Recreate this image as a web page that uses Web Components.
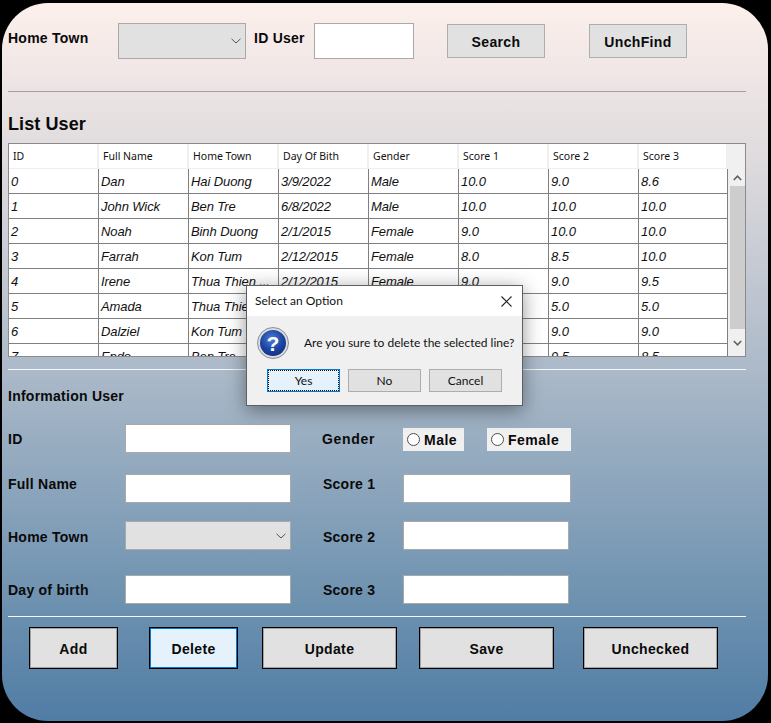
<!DOCTYPE html>
<html lang="en">
<head>
<meta charset="utf-8">
<title>User Manager</title>
<style>
  html, body { margin: 0; background: #000; }
  body { width: 771px; height: 723px; overflow: hidden; font-family: "Liberation Sans", Arial, sans-serif; }
</style>
</head>
<body>
<user-panel>
  <search-bar></search-bar>
  <ui-rule tone="dark" style="margin-top:32px"></ui-rule>
  <ui-title style="margin-top:22px">List User</ui-title>
  <user-table style="margin-top:8px"></user-table>
  <ui-rule tone="light" style="margin-top:12px"></ui-rule>
  <user-form></user-form>
  <ui-rule tone="light" style="margin-top:12px"></ui-rule>
  <action-bar></action-bar>
  <option-dialog heading="Select an Option">Are you sure to delete the selected line?</option-dialog>
</user-panel>

<script>
const CHEVRON = `<svg width="10" height="6" viewBox="0 0 10 6"><path d="M.5.8 5 5 9.5.8" fill="none" stroke="#555" stroke-width="1"/></svg>`;

class UserPanel extends HTMLElement {
  constructor() {
    super();
    this.attachShadow({ mode: 'open' });
  }

  connectedCallback() {
    this.shadowRoot.innerHTML = `
      <style>
        :host {
          display: flex;
          flex-direction: column;
          position: relative;
          box-sizing: border-box;
          width: 766px;
          height: 718px;
          margin: 3px 0 0 2px;
          padding: 20px 22px 0 6px;
          border-radius: 46px;
          overflow: hidden;
          background: linear-gradient(180deg, #fdf0ec 0%, #dbd8dc 24%, #a8b7c7 53%, #6e92b0 83%, #517ca5 100%);
        }
      </style>
      <slot></slot>
    `;
  }
}

class UiRule extends HTMLElement {
  constructor() {
    super();
    this.attachShadow({ mode: 'open' });
  }

  connectedCallback() {
    const color = this.getAttribute('tone') === 'light' ? '#f4f6f8' : '#a0a0a0';
    this.shadowRoot.innerHTML = `<style>:host { display: block; height: 1px; background: ${color}; }</style>`;
  }
}

class UiTitle extends HTMLElement {
  constructor() {
    super();
    this.attachShadow({ mode: 'open' });
  }

  connectedCallback() {
    this.shadowRoot.innerHTML = `
      <style>
        :host { display: block; font: bold 18px/21px "Liberation Sans", Arial, sans-serif; letter-spacing: .1px; color: #0a0a0a; }
      </style>
      <slot></slot>
    `;
  }
}

class UiLabel extends HTMLElement {
  constructor() {
    super();
    this.attachShadow({ mode: 'open' });
  }

  connectedCallback() {
    this.shadowRoot.innerHTML = `
      <style>
        :host {
          display: block;
          font: bold 14px/16px "Liberation Sans", Arial, sans-serif;
          letter-spacing: .25px;
          color: #0a0a0a;
          white-space: nowrap;
        }
      </style>
      <slot></slot>
    `;
  }
}

class UiInput extends HTMLElement {
  constructor() {
    super();
    this.attachShadow({ mode: 'open' });
  }

  connectedCallback() {
    this.shadowRoot.innerHTML = `
      <style>
        :host { display: block; box-sizing: border-box; height: 29px; background: #fff; border: 1px solid #a9a9a9; }
      </style>
    `;
  }
}

class UiCombo extends HTMLElement {
  constructor() {
    super();
    this.attachShadow({ mode: 'open' });
  }

  connectedCallback() {
    this.shadowRoot.innerHTML = `
      <style>
        :host {
          display: flex;
          align-items: center;
          justify-content: flex-end;
          box-sizing: border-box;
          height: 29px;
          padding: 0 4px 0 0;
          background: #e1e1e1;
          border: 1px solid #a9a9a9;
        }
      </style>
      ${CHEVRON}
    `;
  }
}

class UiButton extends HTMLElement {
  constructor() {
    super();
    this.attachShadow({ mode: 'open' });
  }

  connectedCallback() {
    this.shadowRoot.innerHTML = `
      <style>
        :host {
          display: flex;
          align-items: center;
          justify-content: center;
          box-sizing: border-box;
          padding-top: 2px;
          font: bold 14px/16px "Liberation Sans", Arial, sans-serif;
          letter-spacing: .35px;
          color: #0a0a0a;
          background: #e1e1e1;
        }
        :host([kind="flat"]) { border: 1px solid #adadad; }
        :host([kind="raised"]) { border: 1px solid #000; box-shadow: inset 0 0 0 1px #a3a3a3; }
        :host([kind="active"]) { border: 1px solid #000; box-shadow: inset 0 0 0 1px #0078d7; background: #e5f1fb; }
      </style>
      <slot></slot>
    `;
  }
}

class UiRadio extends HTMLElement {
  constructor() {
    super();
    this.attachShadow({ mode: 'open' });
  }

  connectedCallback() {
    this.shadowRoot.innerHTML = `
      <style>
        :host {
          display: flex;
          align-items: center;
          gap: 4px;
          box-sizing: border-box;
          height: 23px;
          padding-left: 4px;
          background: #f0f0f0;
          font: bold 14px/16px "Liberation Sans", Arial, sans-serif;
          letter-spacing: .5px;
          color: #0a0a0a;
        }
        i {
          display: block;
          box-sizing: border-box;
          width: 13px;
          height: 13px;
          border: 1px solid #4d4d4d;
          border-radius: 50%;
          background: #fff;
        }
      </style>
      <i></i><slot></slot>
    `;
  }
}

class SearchBar extends HTMLElement {
  constructor() {
    super();
    this.attachShadow({ mode: 'open' });
  }

  connectedCallback() {
    this.shadowRoot.innerHTML = `
      <style>
        :host { display: flex; align-items: flex-start; }
        .lbl { margin-top: 7px; }
        .town { width: 110px; }
        ui-combo { width: 128px; height: 36px; }
        .uid { width: 60px; margin-left: 8px; }
        ui-input { width: 100px; height: 36px; }
        ui-button { width: 98px; height: 34px; margin-top: 1px; }
        .search { margin-left: 33px; }
        .unch { margin-left: 44px; }
      </style>
      <ui-label class="lbl town">Home Town</ui-label>
      <ui-combo></ui-combo>
      <ui-label class="lbl uid">ID User</ui-label>
      <ui-input></ui-input>
      <ui-button class="search" kind="flat">Search</ui-button>
      <ui-button class="unch" kind="flat">UnchFind</ui-button>
    `;
  }
}

class UserTable extends HTMLElement {
  constructor() {
    super();
    this.attachShadow({ mode: 'open' });
  }

  connectedCallback() {
    const heads = ['ID', 'Full Name', 'Home Town', 'Day Of Bith', 'Gender', 'Score 1', 'Score 2', 'Score 3'];
    const rows = [
      ['0', 'Dan', 'Hai Duong', '3/9/2022', 'Male', '10.0', '9.0', '8.6'],
      ['1', 'John Wick', 'Ben Tre', '6/8/2022', 'Male', '10.0', '10.0', '10.0'],
      ['2', 'Noah', 'Binh Duong', '2/1/2015', 'Female', '9.0', '10.0', '10.0'],
      ['3', 'Farrah', 'Kon Tum', '2/12/2015', 'Female', '8.0', '8.5', '10.0'],
      ['4', 'Irene', 'Thua Thien ...', '2/12/2015', 'Female', '9.0', '9.0', '9.5'],
      ['5', 'Amada', 'Thua Thien ...', '2/12/2015', 'Female', '5.0', '5.0', '5.0'],
      ['6', 'Dalziel', 'Kon Tum', '2/12/2015', 'Female', '9.0', '9.0', '9.0'],
      ['7', 'Endo', 'Ben Tre', '2/12/2015', 'Female', '9.5', '9.5', '8.5']
    ];

    this.shadowRoot.innerHTML = `
      <style>
        :host {
          display: grid;
          grid-template-columns: 719px 18px;
          box-sizing: border-box;
          width: 738px;
          height: 214px;
          border: 1px solid #8a8a8a;
          background: #fff;
          overflow: hidden;
        }
        .grid { min-width: 0; }
        .row {
          display: grid;
          grid-template-columns: 90px 90px 90px 90px 90px 90px 90px 89px;
        }
        .head { height: 25px; box-sizing: border-box; border-bottom: 1px solid #eee; }
        .head span {
          box-sizing: border-box;
          padding-left: 4px;
          border-right: 2px solid #f0f0f0;
          font: 10.5px/24px "Noto Sans", Tahoma, sans-serif;
          color: #111;
        }
        .body { height: 25px; box-sizing: border-box; border-bottom: 1px solid #808080; }
        .body span {
          box-sizing: border-box;
          padding-left: 2px;
          border-right: 1px solid #808080;
          font: italic 13px/26px "Liberation Sans", Arial, sans-serif;
          letter-spacing: -.1px;
          color: #111;
          white-space: nowrap;
          overflow: hidden;
        }
        .bar {
          display: flex;
          flex-direction: column;
          align-items: center;
          background: #f0f0f0;
        }
        .up { height: 17px; margin-top: 25px; display: flex; align-items: center; }
        .thumb { width: 15px; height: 143px; background: #cdcdcd; }
        .down { height: 27px; display: flex; align-items: center; }
      </style>
      <div class="grid">
        <div class="row head">${heads.map(h => `<span>${h}</span>`).join('')}</div>
        ${rows.map(r => `<div class="row body">${r.map(c => `<span>${c}</span>`).join('')}</div>`).join('')}
      </div>
      <div class="bar">
        <div class="up"><svg width="9" height="6" viewBox="0 0 9 6"><path d="M.8 5 4.5 1.2 8.2 5" fill="none" stroke="#606060" stroke-width="1.6"/></svg></div>
        <div class="thumb"></div>
        <div class="down"><svg width="9" height="6" viewBox="0 0 9 6"><path d="M.8 1 4.5 4.8 8.2 1" fill="none" stroke="#606060" stroke-width="1.6"/></svg></div>
      </div>
    `;
  }
}

class UserForm extends HTMLElement {
  constructor() {
    super();
    this.attachShadow({ mode: 'open' });
  }

  connectedCallback() {
    this.shadowRoot.innerHTML = `
      <style>
        :host { display: block; padding-top: 18px; }
        .row {
          display: grid;
          grid-template-columns: 117px 166px 31px 81px 168px;
          align-items: center;
        }
        .row1 { margin-top: 20px; }
        .row2 { margin-top: 21px; }
        .row3 { margin-top: 18px; }
        .row4 { margin-top: 25px; }
        .lift { margin-bottom: 10px; }
        .drop { margin-top: 3px; }
        .score { padding-left: 1px; }
        .gender { display: flex; margin-top: 2px; }
        .male { width: 61px; }
        .female { width: 84px; margin-left: 23px; }
        .short { width: 166px; }
      </style>
      <ui-label>Information User</ui-label>
      <div class="row row1">
        <ui-label>ID</ui-label><ui-input></ui-input><span></span>
        <ui-label style="letter-spacing:.7px">Gender</ui-label>
        <div class="gender"><ui-radio class="male">Male</ui-radio><ui-radio class="female">Female</ui-radio></div>
      </div>
      <div class="row row2">
        <ui-label class="lift">Full Name</ui-label><ui-input></ui-input><span></span>
        <ui-label class="lift score">Score 1</ui-label><ui-input></ui-input>
      </div>
      <div class="row row3">
        <ui-label class="drop">Home Town</ui-label><ui-combo></ui-combo><span></span>
        <ui-label class="drop score">Score 2</ui-label><ui-input class="short"></ui-input>
      </div>
      <div class="row row4">
        <ui-label>Day of birth</ui-label><ui-input></ui-input><span></span>
        <ui-label class="score">Score 3</ui-label><ui-input class="short"></ui-input>
      </div>
    `;
  }
}

class ActionBar extends HTMLElement {
  constructor() {
    super();
    this.attachShadow({ mode: 'open' });
  }

  connectedCallback() {
    this.shadowRoot.innerHTML = `
      <style>
        :host { display: flex; margin-top: 10px; padding-left: 21px; }
        ui-button { height: 42px; width: 135px; }
        .small { width: 89px; }
        .del { margin-left: 31px; }
        .upd { margin-left: 24px; }
        .sav { margin-left: 22px; }
        .unc { margin-left: 29px; }
      </style>
      <ui-button class="small" kind="raised">Add</ui-button>
      <ui-button class="small del" kind="active">Delete</ui-button>
      <ui-button class="upd" kind="raised">Update</ui-button>
      <ui-button class="sav" kind="raised">Save</ui-button>
      <ui-button class="unc" kind="raised">Unchecked</ui-button>
    `;
  }
}

class OptionDialog extends HTMLElement {
  constructor() {
    super();
    this.attachShadow({ mode: 'open' });
  }

  connectedCallback() {
    const heading = this.getAttribute('heading') || '';
    this.shadowRoot.innerHTML = `
      <style>
        :host {
          position: absolute;
          left: 244px;
          top: 282px;
          display: block;
          box-sizing: border-box;
          width: 277px;
          height: 121px;
          background: #f0f0f0;
          border: 1px solid #5c5f63;
          box-shadow: 0 4px 18px rgba(0,0,0,.42);
          font: 12px/16px Lato, "Open Sans", sans-serif;
          color: #111;
        }
        header {
          display: flex;
          align-items: center;
          justify-content: space-between;
          height: 30px;
          padding: 0 10px 0 8px;
          background: #fff;
        }
        .msg {
          display: flex;
          align-items: center;
          gap: 15px;
          height: 53px;
          padding-left: 10px;
          white-space: nowrap;
        }
        .btns { display: flex; gap: 8px; padding-left: 20px; }
        .btn {
          display: flex;
          align-items: center;
          justify-content: center;
          box-sizing: border-box;
          width: 73px;
          height: 23px;
          background: #e1e1e1;
          border: 1px solid #adadad;
        }
        .btn.on {
          border-color: #0078d7;
          background: #e5f1fb;
          outline: 1px dotted #111;
          outline-offset: -2px;
        }
      </style>
      <header>
        <span>${heading}</span>
        <svg width="11" height="11" viewBox="0 0 11 11"><path d="M.5.5 10.5 10.5M10.5.5.5 10.5" stroke="#222" stroke-width="1.1"/></svg>
      </header>
      <div class="msg">
        <svg width="32" height="32" viewBox="0 0 32 32">
          <defs>
            <radialGradient id="orb" cx=".45" cy=".35" r=".75">
              <stop offset="0" stop-color="#4f7fd6"/>
              <stop offset=".55" stop-color="#1d45a3"/>
              <stop offset="1" stop-color="#0e2a78"/>
            </radialGradient>
          </defs>
          <circle cx="16" cy="16" r="15.5" fill="#d9dbe0" stroke="#8d9098"/>
          <circle cx="16" cy="16" r="13" fill="url(#orb)"/>
          <text x="16" y="23.5" text-anchor="middle" font-family="Liberation Sans, Arial, sans-serif" font-weight="bold" font-size="21" fill="#fff">?</text>
        </svg>
        <span><slot></slot></span>
      </div>
      <div class="btns">
        <div class="btn on">Yes</div>
        <div class="btn">No</div>
        <div class="btn">Cancel</div>
      </div>
    `;
  }
}

customElements.define('user-panel', UserPanel);
customElements.define('ui-rule', UiRule);
customElements.define('ui-title', UiTitle);
customElements.define('ui-label', UiLabel);
customElements.define('ui-input', UiInput);
customElements.define('ui-combo', UiCombo);
customElements.define('ui-button', UiButton);
customElements.define('ui-radio', UiRadio);
customElements.define('search-bar', SearchBar);
customElements.define('user-table', UserTable);
customElements.define('user-form', UserForm);
customElements.define('action-bar', ActionBar);
customElements.define('option-dialog', OptionDialog);
</script>
</body>
</html>
